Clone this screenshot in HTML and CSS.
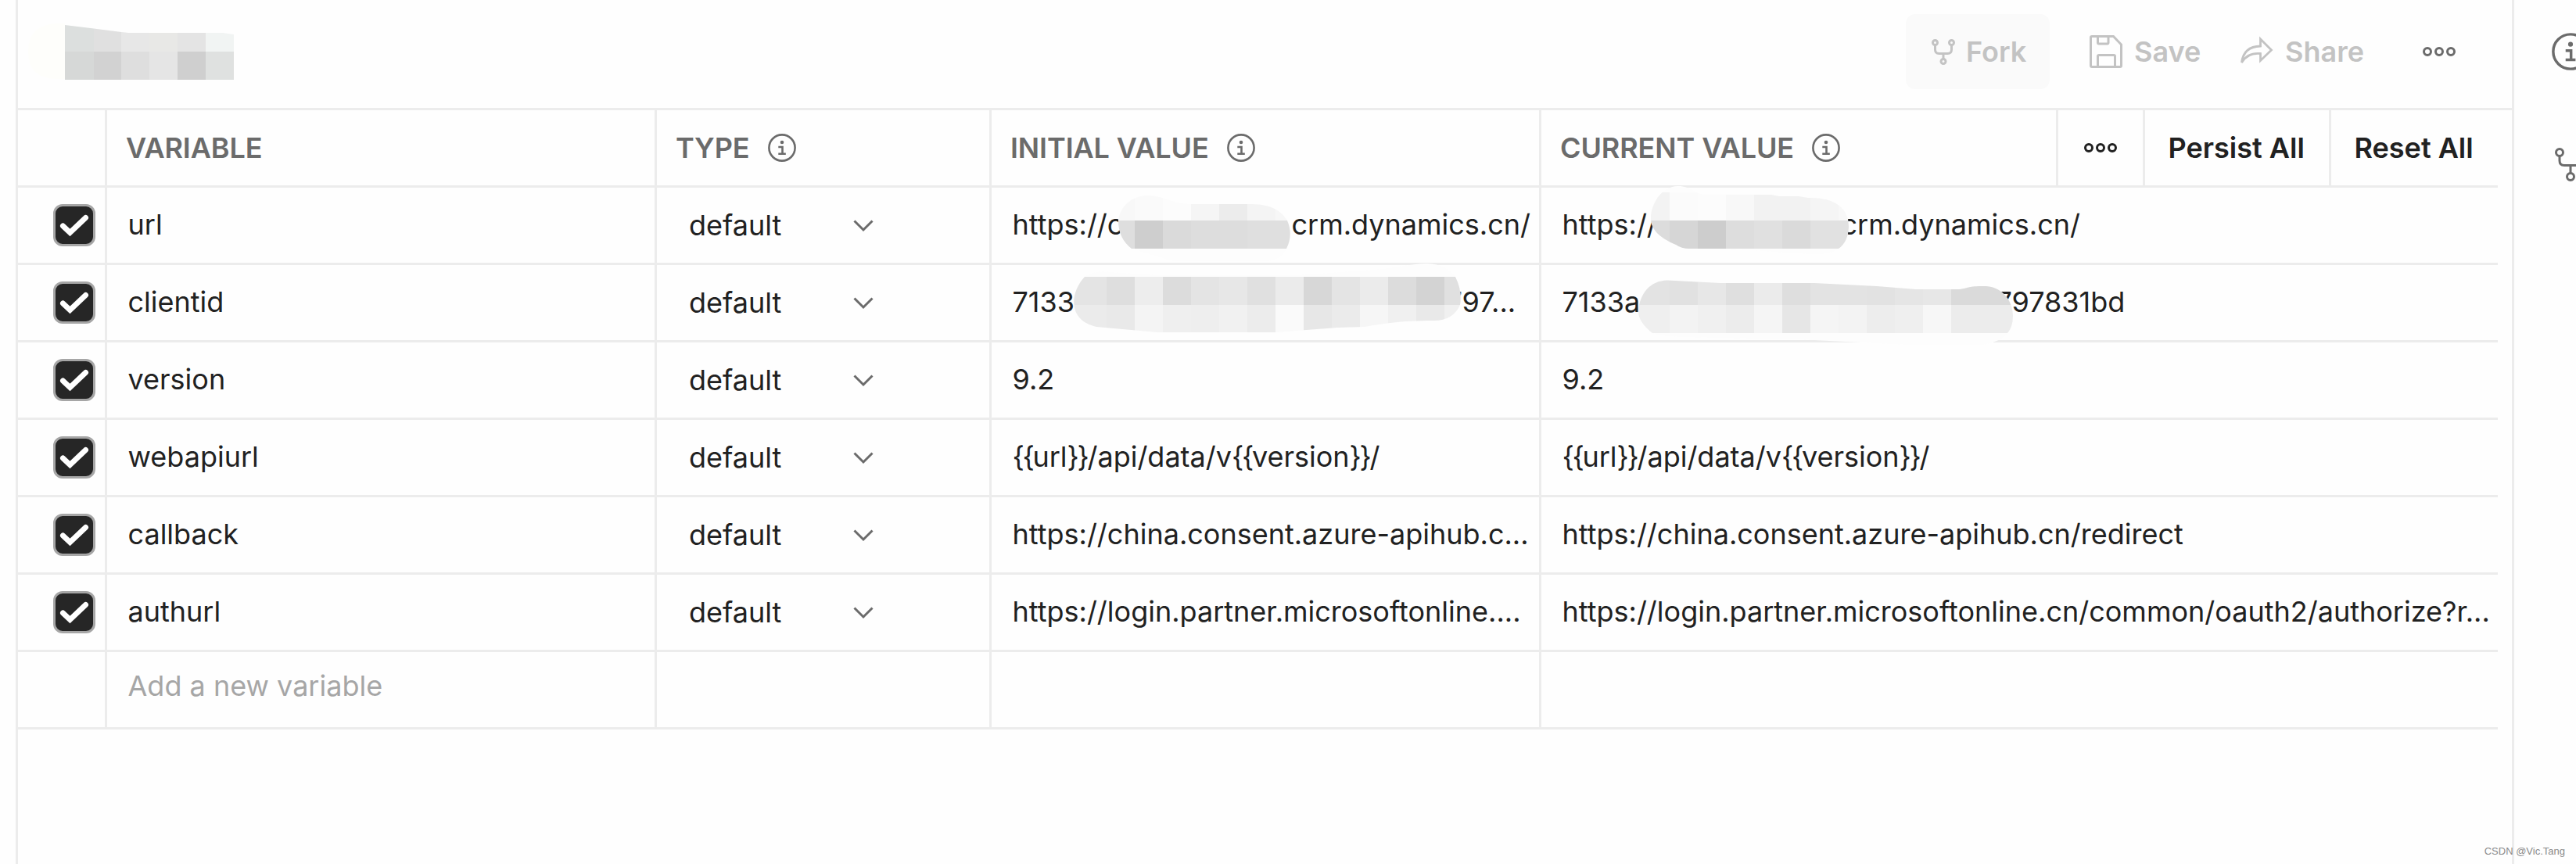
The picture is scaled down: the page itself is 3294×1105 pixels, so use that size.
FILE: index.html
```html
<!DOCTYPE HTML>
<html>
<head>
<meta charset="utf-8">
<title>Environment</title>
<link rel="stylesheet" href="styles.css">
</head>
<body>
<svg class="defs">
	<symbol id="info" viewBox="0 0 36 36"><g fill="none" stroke="currentColor" stroke-width="2.6"><circle cx="18" cy="18" r="16.6"/><path d="M13.3 17h5.200v9M13.300 25.800h9.500"/></g><circle cx="18" cy="11" r="2.300" fill="currentColor"/></symbol>
	<symbol id="dots" viewBox="0 0 42 12"><g fill="none" stroke="currentColor" stroke-width="3"><circle cx="6" cy="6" r="4.5"/><circle cx="21" cy="6" r="4.5"/><circle cx="36" cy="6" r="4.5"/></g></symbol>
	<symbol id="down" viewBox="0 0 26 16"><path d="M1.5 1.500l11.500 11.500L24.500 1.500" fill="none" stroke="currentColor" stroke-width="3"/></symbol>
	<symbol id="check" viewBox="0 0 54 54"><rect x="1.500" y="1.500" width="51" height="51" rx="10.500" fill="#262626" stroke="#a6a6a6" stroke-width="3"/><path d="M12.500 28l9 8.500L41.500 17.500" fill="none" stroke="#fff" stroke-width="7" stroke-linecap="round"/></symbol>
</svg>
<div class="page">
	<div class="main">
		<div class="top">
			<svg class="title" viewBox="23 0 290 138">
				<path d="M83 30H72Q36 32 36 66T72 101H83z" fill="#fefefb"/>
				<path d="M83 32L120 36.500V66H83z" fill="#dcdfde"/>
				<path d="M120 36.500L155 41V66H120z" fill="#e0e0e0"/>
				<path d="M155 41L165 42H191V66H155z" fill="#e7e7e7"/>
				<path d="M191 42H227V66H191z" fill="#e8e8e6"/>
				<path d="M227 42H263V66H227z" fill="#e4e4e4"/>
				<path d="M263 42H285L299 44V66H263z" fill="#f1f4f3"/>
				<path d="M83 66H120V102H83z" fill="#d6d8d7"/>
				<path d="M120 66H155V102H120z" fill="#d2d2d2"/>
				<path d="M155 66H191V102H155z" fill="#dedede"/>
				<path d="M191 66H227V102H191z" fill="#e5e5e5"/>
				<path d="M227 66H263V102H227z" fill="#cfcfcf"/>
				<path d="M263 66H299V102H263z" fill="#dfe1e0"/>
			</svg>
			<div class="actions">
				<div class="btn fork">
					<svg viewBox="0 0 30 33"><g fill="none" stroke="currentColor" stroke-width="3"><circle cx="4.500" cy="4.500" r="3"/><circle cx="25.500" cy="4.500" r="3"/><circle cx="15" cy="28.500" r="3"/><path d="M4.500 8v5.500q0 5 5 5h11q5 0 5-5V8M15 18.500v7"/></g></svg>Fork
				</div>
				<div class="btn save">
					<svg viewBox="0 0 42 42"><path d="M3 1.500H30.500L40.500 12V39q0 1.500-1.500 1.500H3q-1.500 0-1.500-1.500V3q0-1.500 1.500-1.500zM10.500 1.500v8q0 1.500 1.500 1.500h10.500q1.500 0 1.500-1.500v-8M10.500 40.500V27q0-1.500 1.500-1.500h19q1.500 0 1.500 1.500v13.500" fill="none" stroke="currentColor" stroke-width="3"/></svg>Save
				</div>
				<div class="btn share">
					<svg viewBox="0 0 42 40"><path d="M25.500 4L39.500 18L25.500 31.500V22.500Q9 21 1.500 34Q4 13.500 25.500 13z" fill="none" stroke="currentColor" stroke-width="2.800"/></svg>Share
				</div>
				<svg class="dots"><use href="#dots"/></svg>
			</div>
		</div>
		<div class="grid">
			<div class="row head">
				<div class="cell"></div>
				<div class="cell">VARIABLE</div>
				<div class="cell">TYPE<svg class="info"><use href="#info"/></svg></div>
				<div class="cell">INITIAL VALUE<svg class="info"><use href="#info"/></svg></div>
				<div class="cell">CURRENT VALUE<svg class="info"><use href="#info"/></svg>
					<div class="tools">
						<div class="more"><svg class="dots"><use href="#dots"/></svg></div>
						<div class="persist">Persist All</div>
						<div class="reset">Reset All</div>
					</div>
				</div>
			</div>
			<div class="row">
				<div class="cell"><svg class="check"><use href="#check"/></svg></div>
				<div class="cell">url</div>
				<div class="cell type"><span>default</span><svg class="down"><use href="#down"/></svg></div>
				<div class="cell"><span class="host">https://c</span>crm.dynamics.cn/</div>
				<div class="cell"><span class="host">https://</span>crm.dynamics.cn/</div>
			</div>
			<div class="row">
				<div class="cell"><svg class="check"><use href="#check"/></svg></div>
				<div class="cell">clientid</div>
				<div class="cell type"><span>default</span><svg class="down"><use href="#down"/></svg></div>
				<div class="cell"><span class="guid">7133</span>797...</div>
				<div class="cell"><span class="guid">7133a</span>797831bd</div>
			</div>
			<div class="row">
				<div class="cell"><svg class="check"><use href="#check"/></svg></div>
				<div class="cell">version</div>
				<div class="cell type"><span>default</span><svg class="down"><use href="#down"/></svg></div>
				<div class="cell">9.2</div>
				<div class="cell">9.2</div>
			</div>
			<div class="row">
				<div class="cell"><svg class="check"><use href="#check"/></svg></div>
				<div class="cell">webapiurl</div>
				<div class="cell type"><span>default</span><svg class="down"><use href="#down"/></svg></div>
				<div class="cell"><b>{{</b>url<b>}}</b>/api/data/v<b>{{</b>version<b>}}</b>/</div>
				<div class="cell"><b>{{</b>url<b>}}</b>/api/data/v<b>{{</b>version<b>}}</b>/</div>
			</div>
			<div class="row">
				<div class="cell"><svg class="check"><use href="#check"/></svg></div>
				<div class="cell">callback</div>
				<div class="cell type"><span>default</span><svg class="down"><use href="#down"/></svg></div>
				<div class="cell">https://china.consent.azure-apihub.c...</div>
				<div class="cell">https://china.consent.azure-apihub.cn/redirect</div>
			</div>
			<div class="row">
				<div class="cell"><svg class="check"><use href="#check"/></svg></div>
				<div class="cell">authurl</div>
				<div class="cell type"><span>default</span><svg class="down"><use href="#down"/></svg></div>
				<div class="cell">https://login.partner.microsoftonline....</div>
				<div class="cell">https://login.partner.microsoftonline.cn/common/oauth2/authorize?r...</div>
			</div>
			<div class="row add">
				<div class="cell"></div>
				<div class="cell">Add a new variable</div>
				<div class="cell"></div>
				<div class="cell"></div>
				<div class="cell"></div>
			</div>
		</div>
	</div>
	<div class="side">
		<svg class="side-info"><use href="#info"/></svg>
		<svg class="side-fork" viewBox="0 0 40 43"><g fill="none" stroke="currentColor" stroke-width="3"><circle cx="6" cy="6" r="4.500"/><circle cx="34" cy="6" r="4.500"/><circle cx="20" cy="37" r="4.500"/><path d="M6 10.500v6q0 6 6 6h16q6 0 6-6v-6M20 22.500V32.500"/></g></svg>
	</div>
</div>

<!-- mosaic over the private values -->
<svg class="mosaic" viewBox="1360 230 1240 220">
	<clipPath id="m1"><path d="M1430 282C1432 262 1450 250 1467 250C1488 250 1500 261 1523 261H1600C1628 261 1640 272 1646 282Q1654 300 1645 318Q1638 334 1618 334H1500Q1470 325 1447 318Q1430 305 1430 282z"/></clipPath>
	<clipPath id="m2"><path d="M1387 354Q1400 345 1420 348L1480 352H1660L1770 344Q1810 337 1825 337Q1850 338 1861 354Q1870 372 1867 390Q1858 410 1834 410C1800 410 1780 412 1745 418L1710 419L1631 425H1480L1402 418C1365 410 1368 374 1387 354z"/></clipPath>
	<clipPath id="m3"><path d="M2111 276C2113 255 2128 238 2146 238C2163 238 2165 249 2185 249H2265L2275 251H2300L2312 253C2340 252 2364 262 2364 290Q2363 310 2351 318Q2340 326 2315 325L2240 320L2160 318Q2150 318 2143 313C2120 303 2110 292 2111 276z"/></clipPath>
	<clipPath id="m4"><path d="M2095 398C2097 375 2110 359 2132 358.500L2200 362H2320L2400 366L2450 370H2505C2520 368 2515 366 2537 366C2560 366 2574 385 2574 404Q2574 418 2567 426Q2555 440 2530 441L2440 441L2300 434L2150 431Q2125 430 2113 426Q2095 412 2095 398z"/></clipPath>
	<g clip-path="url(#m1)">
		<path d="M1420 240h240v100h-240z" fill="#fdfdfd"/>
		<path d="M1420 240h31v42h-31z" fill="#f8f8f8"/><path d="M1451 240h36v42h-36z" fill="#fafafa"/><path d="M1487 240h36v42h-36z" fill="#fcfcfc"/><path d="M1523 240h36v42h-36z" fill="#f5f5f5"/><path d="M1559 240h36v42h-36z" fill="#ececec"/><path d="M1595 240h36v42h-36z" fill="#f4f4f4"/><path d="M1631 240h36v42h-36z" fill="#f7f7f7"/>
		<path d="M1420 282h31v36h-31z" fill="#dedede"/><path d="M1451 282h36v36h-36z" fill="#cecece"/><path d="M1487 282h36v36h-36z" fill="#dadada"/><path d="M1523 282h72v36h-72z" fill="#ddd"/><path d="M1595 282h72v36h-72z" fill="#dfdfdf"/>
	</g>
	<g clip-path="url(#m2)">
		<path d="M1365 330h510v100h-510z" fill="#fdfdfd"/>
		<path d="M1365 354h50v36h-50z" fill="#e4e4e4"/><path d="M1415 354h36v36h-36z" fill="#dedede"/><path d="M1451 354h36v36h-36z" fill="#ededed"/><path d="M1487 354h36v36h-36z" fill="#dcdcdc"/><path d="M1523 354h36v36h-36z" fill="#e4e4e4"/><path d="M1559 354h36v36h-36z" fill="#e7e7e7"/><path d="M1595 354h36v36h-36z" fill="#e0e0e0"/><path d="M1631 354h36v36h-36z" fill="#ebebeb"/><path d="M1667 354h36v36h-36z" fill="#d7d7d7"/><path d="M1703 354h36v36h-36z" fill="#e4e4e4"/><path d="M1739 354h36v36h-36z" fill="#ebebeb"/><path d="M1775 354h36v36h-36z" fill="#dcdcdc"/><path d="M1811 354h36v36h-36z" fill="#d3d3d3"/><path d="M1847 354h36v36h-36z" fill="#e0e0e0"/>
		<path d="M1365 390h50v36h-50z" fill="#ebebeb"/><path d="M1415 390h36v36h-36z" fill="#e9e9e9"/><path d="M1451 390h36v36h-36z" fill="#f4f4f4"/><path d="M1487 390h36v36h-36z" fill="#efefef"/><path d="M1523 390h36v36h-36z" fill="#eee"/><path d="M1559 390h36v36h-36z" fill="#f1f1f1"/><path d="M1595 390h36v36h-36z" fill="#ececec"/><path d="M1631 390h36v36h-36z" fill="#fafafa"/><path d="M1667 390h36v36h-36z" fill="#e7e7e7"/><path d="M1703 390h36v36h-36z" fill="#ebebeb"/><path d="M1739 390h36v36h-36z" fill="#f6f6f6"/><path d="M1775 390h36v36h-36z" fill="#f0f0f0"/><path d="M1811 390h36v36h-36z" fill="#e9e9e9"/><path d="M1847 390h36v36h-36z" fill="#f0f0f0"/>
	</g>
	<g clip-path="url(#m3)">
		<path d="M2105 232h265v98h-265z" fill="#fdfdfd"/>
		<path d="M2105 246h30v36h-30z" fill="#f3f3f3"/><path d="M2135 246h36v36h-36z" fill="#fbfbfb"/><path d="M2171 246h36v36h-36z" fill="#fcfcfc"/><path d="M2207 246h36v36h-36z" fill="#f8f8f8"/><path d="M2243 246h72v36h-72z" fill="#f2f2f2"/><path d="M2315 246h36v36h-36z" fill="#f5f5f5"/><path d="M2351 246h20v36h-20z" fill="#f8f8f8"/>
		<path d="M2105 282h30v36h-30z" fill="#dcdcdc"/><path d="M2135 282h36v36h-36z" fill="#d6d6d6"/><path d="M2171 282h36v36h-36z" fill="#cdcdcd"/><path d="M2207 282h36v36h-36z" fill="#ddd"/><path d="M2243 282h36v36h-36z" fill="#e0e0e0"/><path d="M2279 282h36v36h-36z" fill="#dadada"/><path d="M2315 282h56v36h-56z" fill="#e1e1e1"/>
	</g>
	<g clip-path="url(#m4)">
		<path d="M2090 350h490v95h-490z" fill="#fdfdfd"/>
		<path d="M2090 350h45v40h-45z" fill="#e3e3e3"/><path d="M2135 350h36v40h-36z" fill="#e1e1e1"/><path d="M2171 350h36v40h-36z" fill="#e7e7e7"/><path d="M2207 350h36v40h-36z" fill="#dfdfdf"/><path d="M2243 350h36v40h-36z" fill="#ebebeb"/><path d="M2279 350h36v40h-36z" fill="#dedede"/><path d="M2315 350h72v40h-72z" fill="#e3e3e3"/><path d="M2387 350h36v40h-36z" fill="#e2e2e2"/><path d="M2423 350h36v40h-36z" fill="#e5e5e5"/><path d="M2459 350h36v40h-36z" fill="#e7e7e7"/><path d="M2495 350h85v40h-85z" fill="#dadada"/>
		<path d="M2090 390h45v36h-45z" fill="#efefef"/><path d="M2135 390h36v36h-36z" fill="#f3f3f3"/><path d="M2171 390h36v36h-36z" fill="#f0f0f0"/><path d="M2207 390h36v36h-36z" fill="#ececec"/><path d="M2243 390h36v36h-36z" fill="#f5f5f5"/><path d="M2279 390h36v36h-36z" fill="#e6e6e6"/><path d="M2315 390h36v36h-36z" fill="#f5f5f5"/><path d="M2351 390h36v36h-36z" fill="#f3f3f3"/><path d="M2387 390h36v36h-36z" fill="#ededed"/><path d="M2423 390h36v36h-36z" fill="#efefef"/><path d="M2459 390h36v36h-36z" fill="#f7f7f7"/><path d="M2495 390h85v36h-85z" fill="#ececec"/>
	</g>
</svg>
<div class="mark">CSDN @Vic.Tang</div>
</body>
</html>
```
FILE: styles.css
```css
body { margin:0; background:#fefefe; font:36px Inter,sans-serif; color:#212121; overflow:hidden;}
svg { flex-shrink:0;}
.defs { display:none;}
.page { display:flex; height:1105px; padding-left:20px; overflow:hidden;}
.main { width:3189px; flex-shrink:0; border-left:3px solid #ececec; border-right:3px solid #ececec;}

.top { height:138px; display:flex; justify-content:space-between; border-bottom:3px solid #ececec;}
.title { width:290px; height:138px;}
.actions { display:flex; align-items:center; height:132px; padding-right:72px; color:#c3c3c3; font-weight:600;}
.actions .dots { color:#6b6b6b;}
.btn { display:flex; align-items:center;}
.btn svg { width:42px; height:42px; margin-right:15px;}
.fork { box-sizing:border-box; width:184px; height:96px; margin-right:51px; padding-left:33px; background:#fafafa; border-radius:12px;}
.fork svg { width:30px; height:33px; margin-right:14px;}
.save { width:193px;}
.share { width:233px;}
.share svg { height:40px;}
.dots { width:42px; height:12px;}

.row { display:grid; grid-template-columns:114px 703px 428px 703px 1223px; height:96px; width:3171px; border-bottom:3px solid #ececec;}
.cell { box-sizing:border-box; display:flex; align-items:center; padding:0 0 2px 26.5px; border-right:3px solid #ececec; white-space:nowrap;}
.cell:first-child { padding:0 0 0 45px;}
.cell:last-child { border:0;}
.cell b { font-weight:inherit; letter-spacing:-2.4px;}
.head { font-weight:600; color:#6b6b6b;}
.head .cell { padding:0 0 0 24px; letter-spacing:-.1px;}
.type { padding:0 0 0 41px;}
.type span { width:210px;}
.host { width:357px;}
.guid { width:555px;}
.info { width:36px; height:36px; margin-left:23.5px;}
.check { width:54px; height:54px;}
.down { width:26px; height:16px; margin-top:1px; color:#6b6b6b;}
.add .cell { padding-bottom:10px; color:#a6a6a6;}

.tools { display:flex; align-self:stretch; margin-left:auto; color:#212121; letter-spacing:0;}
.tools div { box-sizing:border-box; display:flex; align-items:center; border-left:3px solid #ececec; padding-left:29.5px;}
.tools .more { width:111px; padding-left:33px;}
.tools .persist { width:238px;}
.tools .reset { width:216px;}

.side { color:#6b6b6b; display:flex; flex-direction:column; flex-shrink:0; padding:42px 0 0 48px;}
.side-info { width:48px; height:48px;}
.side-fork { width:40px; height:43px; margin:99px 0 0 4px;}

.mosaic { position:absolute; left:1360px; top:230px; width:1240px; height:220px;}
.mark { position:absolute; right:14px; bottom:9px; font:13px "Liberation Sans",sans-serif; color:#8a8a8a;}
```
